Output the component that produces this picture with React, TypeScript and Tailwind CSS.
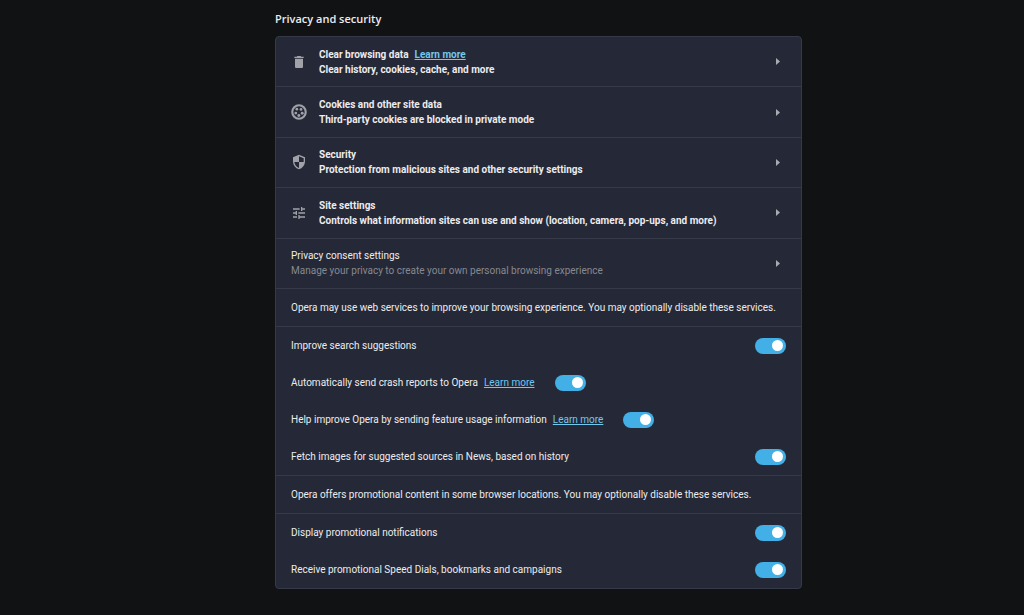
import { useId, type ReactNode } from "react";

function Icon({ children }: { children: ReactNode }) {
  return (
    <svg viewBox="0 0 24 24" className="size-4 shrink-0 fill-[#a0a2a8]" aria-hidden="true">
      {children}
    </svg>
  );
}

const trashIcon = (
  <Icon>
    <path d="M6 19c0 1.1.9 2 2 2h8c1.1 0 2-.9 2-2V7H6v12zM19 4h-3.5l-1-1h-5l-1 1H5v2h14V4z" />
  </Icon>
);

const cookieIcon = (
  <Icon>
    <circle cx="12" cy="12" r="10.1" fill="none" stroke="#a0a2a8" strokeWidth="3.2" />
    <circle cx="8.8" cy="7.8" r="2" />
    <circle cx="15" cy="8.2" r="2.1" />
    <circle cx="7.2" cy="13.6" r="2.1" />
    <circle cx="16.8" cy="14" r="2.2" />
    <circle cx="11.8" cy="17.2" r="2.2" />
  </Icon>
);

const shieldIcon = (
  <Icon>
    <path
      fillRule="evenodd"
      d="M12 1L3 5v6c0 5.55 3.84 10.74 9 12 5.16-1.26 9-6.45 9-12V5l-9-4zM12 12H5c.53 4.12 3.28 7.79 7 8.94V12zM12 12h7V6.3l-7-3.11V12z"
    />
  </Icon>
);

const tuneIcon = (
  <Icon>
    <path d="M3 17v2h6v-2H3zM3 5v2h10V5H3zm10 16v-2h8v-2h-8v-2h-2v6h2zM7 9v2H3v2h4v2h2V9H7zm14 4v-2H11v2h10zm-6-4h2V7h4V5h-4V3h-2v6z" />
  </Icon>
);

function LearnMore() {
  return (
    <a href="#learn-more" className="ml-1.5 text-[#71c7ee] underline">
      Learn more
    </a>
  );
}

function OpenButton({ label }: { label: string }) {
  return (
    <button type="button" aria-label={label} className="flex size-4 shrink-0 items-center justify-center">
      <svg viewBox="0 0 4 7" className="h-[7px] w-1 fill-[#a9abb0]" aria-hidden="true">
        <path d="M0 0L4 3.5L0 7Z" />
      </svg>
    </button>
  );
}

function LinkRow({ icon, title, detail, learnMore }: { icon: ReactNode; title: string; detail: string; learnMore?: boolean }) {
  return (
    <div className="flex items-center gap-3 border-b border-[#363a48] px-[15px] font-bold">
      {icon}
      <div className="min-w-0 flex-1">
        <div>
          {title}
          {learnMore && <LearnMore />}
        </div>
        <div>{detail}</div>
      </div>
      <OpenButton label={title} />
    </div>
  );
}

function Notice({ children }: { children: ReactNode }) {
  return <p className="flex min-h-[38px] items-center border-b border-[#363a48] px-[15px]">{children}</p>;
}

function ToggleRow({ label, learnMore }: { label: string; learnMore?: boolean }) {
  const id = useId();
  return (
    <div className={`flex min-h-[37px] items-center px-[15px] ${learnMore ? "gap-5" : "justify-between gap-3"}`}>
      <div>
        <label htmlFor={id}>{label}</label>
        {learnMore && <LearnMore />}
      </div>
      <input
        id={id}
        type="checkbox"
        role="switch"
        defaultChecked
        className="flex h-4 w-[31px] shrink-0 cursor-pointer appearance-none items-center rounded-full bg-[#5b5f6e] px-[3px] before:size-[11px] before:rounded-full before:bg-white checked:justify-end checked:bg-[#43afe7]"
      />
    </div>
  );
}

export default function App() {
  return (
    <main className="min-h-screen bg-[#111214] pt-2.5 pb-6 pl-[53px] font-[Roboto,sans-serif] text-[10px] leading-[15px] text-[#ececee]">
      <div className="mx-auto max-w-[527px]">
        <h1 className="mb-2 font-['Open_Sans',sans-serif] text-[11px] leading-[18px] font-semibold">Privacy and security</h1>
        <section className="rounded border border-[#363a48] bg-[#252836]">
          <div className="grid min-h-[252px] auto-rows-fr">
            <LinkRow icon={trashIcon} title="Clear browsing data" detail="Clear history, cookies, cache, and more" learnMore />
            <LinkRow icon={cookieIcon} title="Cookies and other site data" detail="Third-party cookies are blocked in private mode" />
            <LinkRow icon={shieldIcon} title="Security" detail="Protection from malicious sites and other security settings" />
            <LinkRow
              icon={tuneIcon}
              title="Site settings"
              detail="Controls what information sites can use and show (location, camera, pop-ups, and more)"
            />
            <div className="flex items-center gap-3 border-b border-[#363a48] px-[15px]">
              <div className="min-w-0 flex-1">
                <div>Privacy consent settings</div>
                <div className="text-[#858890]">Manage your privacy to create your own personal browsing experience</div>
              </div>
              <OpenButton label="Privacy consent settings" />
            </div>
          </div>
          <Notice>
            Opera may use web services to improve your browsing experience. You may optionally disable these services.
          </Notice>
          <div className="border-b border-[#363a48]">
            <ToggleRow label="Improve search suggestions" />
            <ToggleRow label="Automatically send crash reports to Opera" learnMore />
            <ToggleRow label="Help improve Opera by sending feature usage information" learnMore />
            <ToggleRow label="Fetch images for suggested sources in News, based on history" />
          </div>
          <Notice>Opera offers promotional content in some browser locations. You may optionally disable these services.</Notice>
          <ToggleRow label="Display promotional notifications" />
          <ToggleRow label="Receive promotional Speed Dials, bookmarks and campaigns" />
        </section>
      </div>
    </main>
  );
}
